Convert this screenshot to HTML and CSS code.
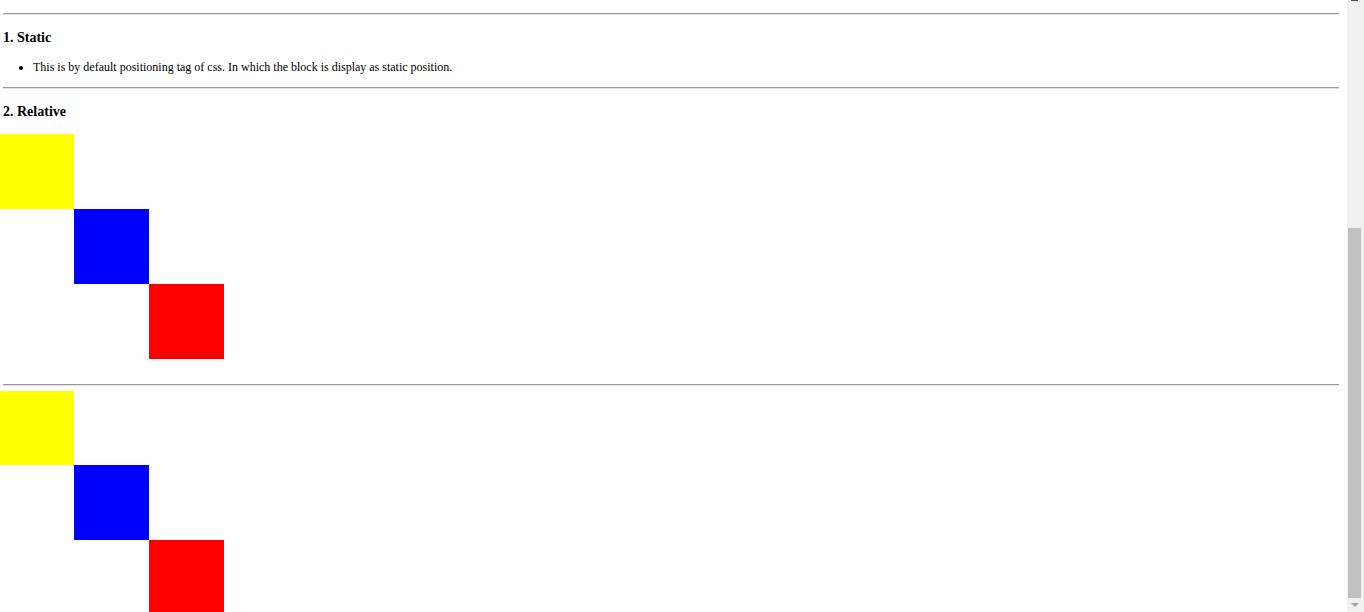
FILE: index.html
```html
<!DOCTYPE html>
<html lang="en">
<head>
<meta charset="utf-8">
<title>CSS Positioning</title>
<link rel="stylesheet" href="styles.css">
</head>
<body>
<main class="page">
  <hr class="rule rule-first">
  <h3 class="title">1. Static</h3>
  <ul class="notes">
    <li>This is by default positioning tag of css. In which the block is display as static position.</li>
  </ul>
  <hr class="rule rule-second">
  <h3 class="title">2. Relative</h3>
  <div class="boxes boxes-first">
    <div class="box yellow"></div>
    <div class="box blue"></div>
    <div class="box red"></div>
  </div>
  <hr class="rule rule-third">
  <div class="boxes boxes-second">
    <div class="box yellow"></div>
    <div class="box blue"></div>
    <div class="box red"></div>
  </div>
</main>
<aside class="scrollbar" aria-hidden="true">
  <div class="sb-up"></div>
  <div class="sb-thumb"></div>
  <div class="sb-down"><span class="sb-arrow"></span></div>
</aside>
</body>
</html>
```
FILE: styles.css
```css
html {
  background: #ffffff;
}

body {
  margin: 0;
  display: flex;
  align-items: flex-start;
  font-family: "Liberation Serif", "Times New Roman", serif;
  color: #000000;
}

.page {
  flex: 1;
  min-width: 0;
  display: flex;
  flex-direction: column;
  padding-top: 13px;
}

.rule {
  height: 0;
  margin: 0 8px 0 3px;
  border: 0;
  border-top: 1px solid #9a9a9a;
  border-bottom: 1px solid #e2e2e2;
}

.rule-second {
  margin-top: 13px;
}

.rule-third {
  margin-top: 25px;
}

.title {
  margin: 15px 0 0 3px;
  font-size: 14px;
  line-height: 16px;
  font-weight: bold;
}

.notes {
  margin: 14px 0 0 3px;
  padding-left: 30px;
  font-size: 12px;
  line-height: 14px;
}

.boxes {
  display: flex;
  flex-direction: column;
}

.boxes-first {
  margin-top: 14px;
}

.boxes-second {
  margin-top: 5px;
}

.box {
  width: 75px;
  height: 75px;
}

.yellow {
  width: 74px;
  background: #ffff00;
}

.boxes-second .yellow {
  height: 74px;
}

.blue {
  background: #0000ff;
  margin-left: 74px;
}

.red {
  background: #ff0000;
  margin-left: 149px;
}

.scrollbar {
  flex: 0 0 17px;
  width: 17px;
  height: 612px;
  background: #f1f1f1;
  display: flex;
  flex-direction: column;
}

.sb-up {
  width: 7px;
  height: 1px;
  margin-left: 4px;
  background: #505050;
}

.sb-thumb {
  width: 13px;
  height: 370px;
  margin: 227px 0 0 1px;
  background: #c1c1c1;
}

.sb-down {
  height: 14px;
  display: flex;
  justify-content: center;
  padding-top: 5px;
  box-sizing: border-box;
}

.sb-arrow {
  width: 0;
  height: 0;
  margin-right: 2px;
  border-top: 4px solid #a3a3a3;
  border-left: 4px solid transparent;
  border-right: 4px solid transparent;
}
```
